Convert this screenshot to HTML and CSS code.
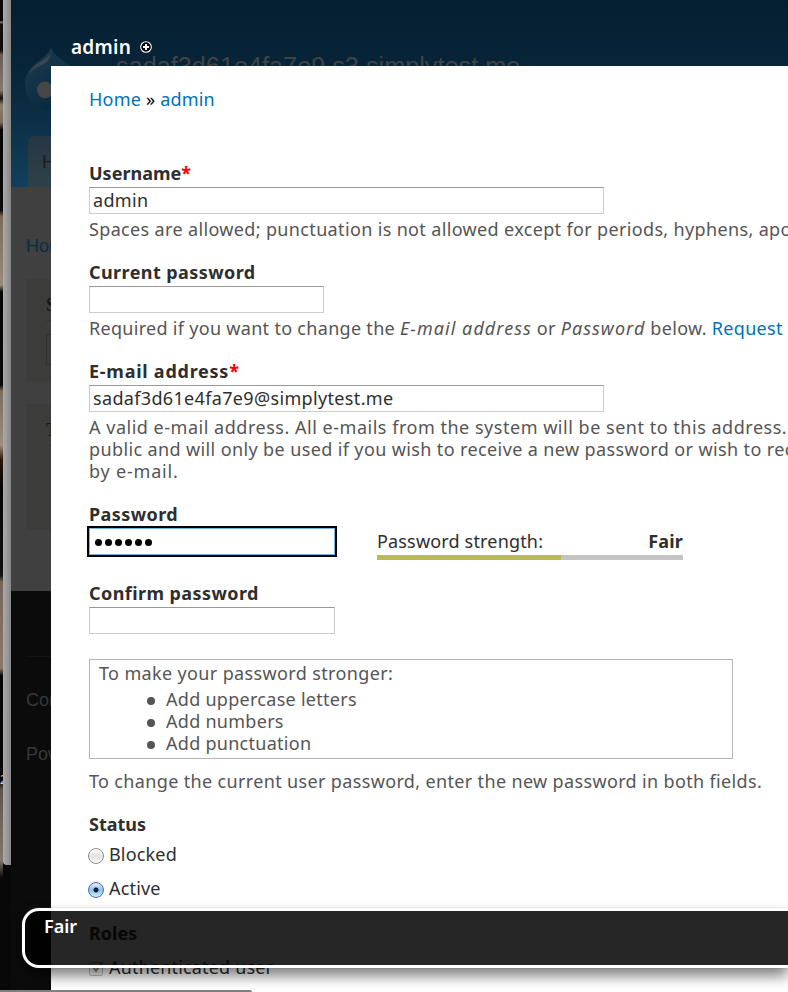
FILE: index.html
```html
<!DOCTYPE html>
<html lang="en">
<head>
    <meta charset="UTF-8">
    <meta name="viewport" content="width=device-width, initial-scale=1.0">
    <title>admin</title>
    <link rel="stylesheet" href="styles.css">
</head>
<body>
    <div class="desktop">
        <div class="wallpaper"><span>2</span></div>
        <div class="window-edge"></div>
        <div class="site">
            <div class="site-header">
                <svg class="logo" width="54" height="66" viewBox="0 0 54 66">
                    <defs>
                        <linearGradient id="drop" x1="0" y1="0" x2=".7" y2="1">
                            <stop offset="0" stop-color="#2c3d48"/>
                            <stop offset=".4" stop-color="#14344a"/>
                            <stop offset="1" stop-color="#07263b"/>
                        </linearGradient>
                    </defs>
                    <path d="M26 2C24 10 15 14 8 21C2 27 0 32 0 39C0 54 11 65 26 65C41 65 53 54 53 39C53 31 49 23 43 19C35 13 28 10 26 2Z" fill="url(#drop)"/>
                    <path d="M4 29C7 19 19 17 25 9C26 17 17 20 12 22C8 24 6 27 4 29Z" fill="#4a4f53" opacity=".7"/>
                    <ellipse cx="20" cy="45" rx="8" ry="8.500" fill="#464646"/>
                </svg>
                <span class="site-name">sadaf3d61e4fa7e9.s3.simplytest.me</span>
                <span class="tab">Home</span>
            </div>
            <div class="site-content">
                <span class="crumb">Home</span>
                <div class="block">
                    <h2>Search</h2>
                    <div class="search-box"></div>
                </div>
                <div class="block tools">
                    <h2>Tools</h2>
                </div>
            </div>
            <div class="site-footer">
                <p>Contact</p>
                <p>Powered by</p>
            </div>
        </div>
    </div>

    <div class="overlay">
        <div class="overlay-title">
            <h1>admin</h1>
            <svg width="12" height="12" viewBox="0 0 12 12">
                <circle cx="6" cy="6" r="5.300" fill="#000" stroke="#fff" stroke-width="1.100"/>
                <path d="M6 3v6M3 6h6" stroke="#fff" stroke-width="2"/>
            </svg>
        </div>
        <div class="overlay-content">
            <div class="breadcrumb"><a>Home</a> » <a>admin</a></div>
            <div class="form-item">
                <label class="username">Username<span class="required">*</span></label>
                <input type="text" class="wide" value="admin">
                <p class="description">Spaces are allowed; punctuation is not allowed except for periods, hyphens, apostrophes</p>
            </div>
            <div class="form-item">
                <label>Current password</label>
                <input type="password" class="short">
                <p class="description current-note">Required if you want to change the <em>E-mail address</em> or <em>Password</em> below. <a>Request</a></p>
            </div>
            <div class="form-item">
                <label class="mail-label">E-mail address<span class="required">*</span></label>
                <input type="text" class="wide" value="sadaf3d61e4fa7e9@simplytest.me">
                <p class="description mail-note"><span>A valid e-mail address. All e-mails from the system will be sent to this address.</span><br>public and will only be used if you wish to receive a new password or wish to receive<br><span>by e-mail.</span></p>
            </div>
            <div class="form-item password-row">
                <div>
                    <label>Password</label>
                    <div class="password focused"><i></i><i></i><i></i><i></i><i></i><i></i></div>
                </div>
                <div class="strength">
                    <div class="strength-text"><span>Password strength:</span><b>Fair</b></div>
                    <div class="indicator"><div style="width: 60%"></div></div>
                </div>
            </div>
            <div class="form-item confirm">
                <label>Confirm password</label>
                <input type="password" class="password">
            </div>
            <div class="suggestions">
                To make your password stronger:
                <ul>
                    <li>Add uppercase letters</li>
                    <li>Add numbers</li>
                    <li>Add punctuation</li>
                </ul>
            </div>
            <p class="description change">To change the current user password, enter the new password in both fields.</p>
            <div class="options">
                <label>Status</label>
                <div class="option"><span class="radio"></span>Blocked</div>
                <div class="option"><span class="radio checked"></span>Active</div>
            </div>
            <div class="options roles">
                <label>Roles</label>
                <div class="option">
                    <svg class="check" width="14" height="14" viewBox="0 0 14 14">
                        <rect x=".5" y=".5" width="13" height="13" rx="2" fill="#f5f5f5" stroke="#bbb"/>
                        <path d="M4 5l3 4l6-9" fill="none" stroke="#888" stroke-width="2"/>
                    </svg>Authenticated user
                </div>
            </div>
        </div>
    </div>

    <div class="announcement">Fair</div>
    <div class="status-bar"></div>
</body>
</html>
```
FILE: styles.css
```css
* {
    box-sizing: border-box;
}
body {
    font-family: "Noto Sans", "Open Sans", sans-serif;
    font-size: 18px;
    line-height: 22px;
    color: #2e2e2e;
    margin: 0;
    height: 992px;
    overflow: hidden;
    position: relative;
}
h1, h2, p, ul {
    margin: 0;
    padding: 0;
}
a {
    color: #0071b8;
}

/* page behind the overlay */
.desktop {
    display: flex;
    height: 992px;
    background: #080808;
}
.wallpaper {
    width: 3px;
    overflow: hidden;
    padding-top: 769px;
    font-size: 12px;
    color: #ccc;
    background: linear-gradient(#0a0706 0, #0a0706 21px, #8e8984 22px, #14100d 24px, #0c0908 50px, #6b5c54 55px, #88786e 90px, #12100e 98px, #8c7c6a 105px, #7e6c5c 122px, #050505 130px, #0a0a0a 210px, #7c6d5a 217px, #988978 285px, #050505 292px, #0a0a0a 385px, #7b6e60 391px, #9b8c7d 445px, #2a1508 460px, #1a0e08 470px, #050505 490px, #111 575px, #756459 582px, #8a786a 668px, #050505 676px, #080808 780px, #5d554c 790px, #80776c 860px, #080808 878px);
}
.window-edge {
    width: 8px;
    height: 865px;
    background: linear-gradient(90deg, #aaa, #999 50%, #858585);
    border-radius: 0 0 0 4px;
}
.site {
    flex: 1;
    font-family: "Liberation Sans", Arial, sans-serif;
}
.site-header {
    height: 187px;
    position: relative;
    background: linear-gradient(#051f30 0, #082438 66px, #0d3046 125px, #12405c 187px);
}
.logo {
    position: absolute;
    left: 14px;
    top: 45px;
}
.site-name {
    position: absolute;
    left: 105px;
    top: 52px;
    font-size: 25.250px;
    line-height: 28px;
    color: #404346;
}
.tab {
    position: absolute;
    left: 17px;
    top: 136px;
    width: 80px;
    height: 51px;
    padding: 15px 14px;
    border-radius: 7px 7px 0 0;
    background: linear-gradient(#263744, #2f4148);
    color: #1c1c1c;
}
.site-content {
    height: 404px;
    padding: 48px 0 0 15px;
    background: #404040;
}
.crumb {
    display: block;
    color: #0c2c42;
    margin-bottom: 22px;
}
.block {
    height: 102px;
    padding: 14px 20px;
    background: #3c3c3a;
    margin-bottom: 23px;
}
.block h2 {
    font: bold 18px/24px "Liberation Serif", Georgia, serif;
    color: #181818;
    padding-bottom: 3px;
    border-bottom: 1px solid #343434;
}
.search-box {
    height: 31px;
    margin-top: 13px;
    border: 1px solid #303030;
}
.tools {
    height: 126px;
}
.site-footer {
    height: 401px;
    padding: 65px 0 0 15px;
    background: linear-gradient(#141414, #141414) 15px 65px / 100% 1px no-repeat #0b0b0b;
    color: #383838;
}
.site-footer p {
    padding-top: 33px;
    margin-bottom: -1px;
}

/* overlay */
.overlay {
    position: absolute;
    left: 51px;
    top: 0;
    width: 737px;
    overflow: hidden;
}
.overlay-title {
    display: flex;
    align-items: center;
    height: 66px;
    padding: 28px 0 0 20px;
    gap: 9px;
}
.overlay-title h1 {
    font-size: 19px;
    font-weight: 600;
    line-height: 22px;
    letter-spacing: .25px;
    color: #fff;
}
.overlay-content {
    height: 926px;
    padding: 22px 0 0 38px;
    background: #fff;
}
.breadcrumb {
    height: 22px;
    margin-bottom: 52px;
    letter-spacing: .2px;
    color: #000;
}
.form-item {
    margin-bottom: 20px;
}
label {
    display: block;
    height: 22px;
    margin-bottom: 3px;
    font-weight: bold;
    letter-spacing: .42px;
}
.username {
    letter-spacing: 0;
}
.mail-label {
    letter-spacing: .75px;
}
.required {
    color: #f00;
    letter-spacing: 0;
}
input, .password {
    display: block;
    height: 27px;
    padding: 0 3px 2px;
    border: 1px solid #ccc;
    border-top-color: #999;
    background: #fff;
    font: inherit;
    letter-spacing: .34px;
    color: #2e2e2e;
}
.wide {
    width: 515px;
}
.short {
    width: 235px;
}
.password {
    width: 246px;
}
.focused {
    display: flex;
    align-items: center;
    gap: 3px;
    padding: 1px 5px 0;
    border-color: #78b4dc;
    outline: 2px solid #000;
}
.focused i {
    width: 7px;
    height: 7px;
    border-radius: 50%;
    background: #000;
}
.description {
    margin-top: 4px;
    padding-bottom: 1px;
    color: #555;
    letter-spacing: .35px;
    white-space: nowrap;
}
.current-note {
    letter-spacing: .3px;
}
.current-note em {
    letter-spacing: 1.040px;
}
.mail-note {
    letter-spacing: .38px;
}
.mail-note span {
    letter-spacing: .52px;
}
.mail-note span:last-child {
    letter-spacing: .8px;
}
.password-row {
    display: flex;
    gap: 42px;
    margin-bottom: 22px;
}
.strength {
    width: 306px;
    padding-top: 27px;
}
.strength-text {
    display: flex;
    justify-content: space-between;
    height: 25px;
    letter-spacing: .17px;
}
.indicator {
    height: 5px;
    background: #c4c4c4;
}
.indicator div {
    height: 5px;
    background: #bb5;
}
.confirm {
    margin-bottom: 25px;
}
.suggestions {
    width: 644px;
    height: 100px;
    padding: 2px 9px;
    border: 1px solid #b4b4b4;
    color: #555;
    letter-spacing: .36px;
}
.suggestions ul {
    margin-top: 4px;
    padding-left: 67px;
    list-style: none;
    letter-spacing: .28px;
}
.suggestions li {
    position: relative;
}
.suggestions li::before {
    content: "";
    position: absolute;
    left: -19px;
    top: 9px;
    width: 8px;
    height: 8px;
    border-radius: 50%;
    background: #555;
}
.change {
    margin: 11px 0 20px;
}
.options label {
    margin-bottom: 8px;
    letter-spacing: 0;
}
.option {
    display: flex;
    align-items: center;
    margin: 0 0 12px -1px;
    gap: 5px;
    letter-spacing: .17px;
}
.radio {
    width: 16px;
    height: 16px;
    margin-top: 3px;
    border: 1px solid #909090;
    border-radius: 50%;
    background: linear-gradient(#fff, #e4e4e4 50%, #fafafa);
}
.radio.checked {
    border-color: #5668a8;
    background: radial-gradient(circle, #0a1c38 2px, transparent 3px), linear-gradient(#e2effb, #8cc2f2 50%, #c8f0ff);
}
.roles {
    margin-top: 23px;
}
.roles label {
    margin-bottom: 12px;
}
.check {
    margin: 3px 1px 0;
}

/* live announcement */
.announcement {
    position: absolute;
    left: 22px;
    right: 0;
    top: 908px;
    height: 60px;
    padding: 4px 19px;
    border: 3px solid #fff;
    border-right: 0;
    border-radius: 17px 0 0 17px;
    background: rgba(0, 0, 0, .85);
    background-clip: padding-box;
    box-shadow: 0 8px 14px rgba(0, 0, 0, .5), 0 0 1px #888;
    color: #fff;
    font-weight: 600;
}
.status-bar {
    position: absolute;
    left: 0;
    bottom: 0;
    width: 252px;
    height: 2px;
    border-radius: 0 2px 0 0;
    background: #808080;
}
```
